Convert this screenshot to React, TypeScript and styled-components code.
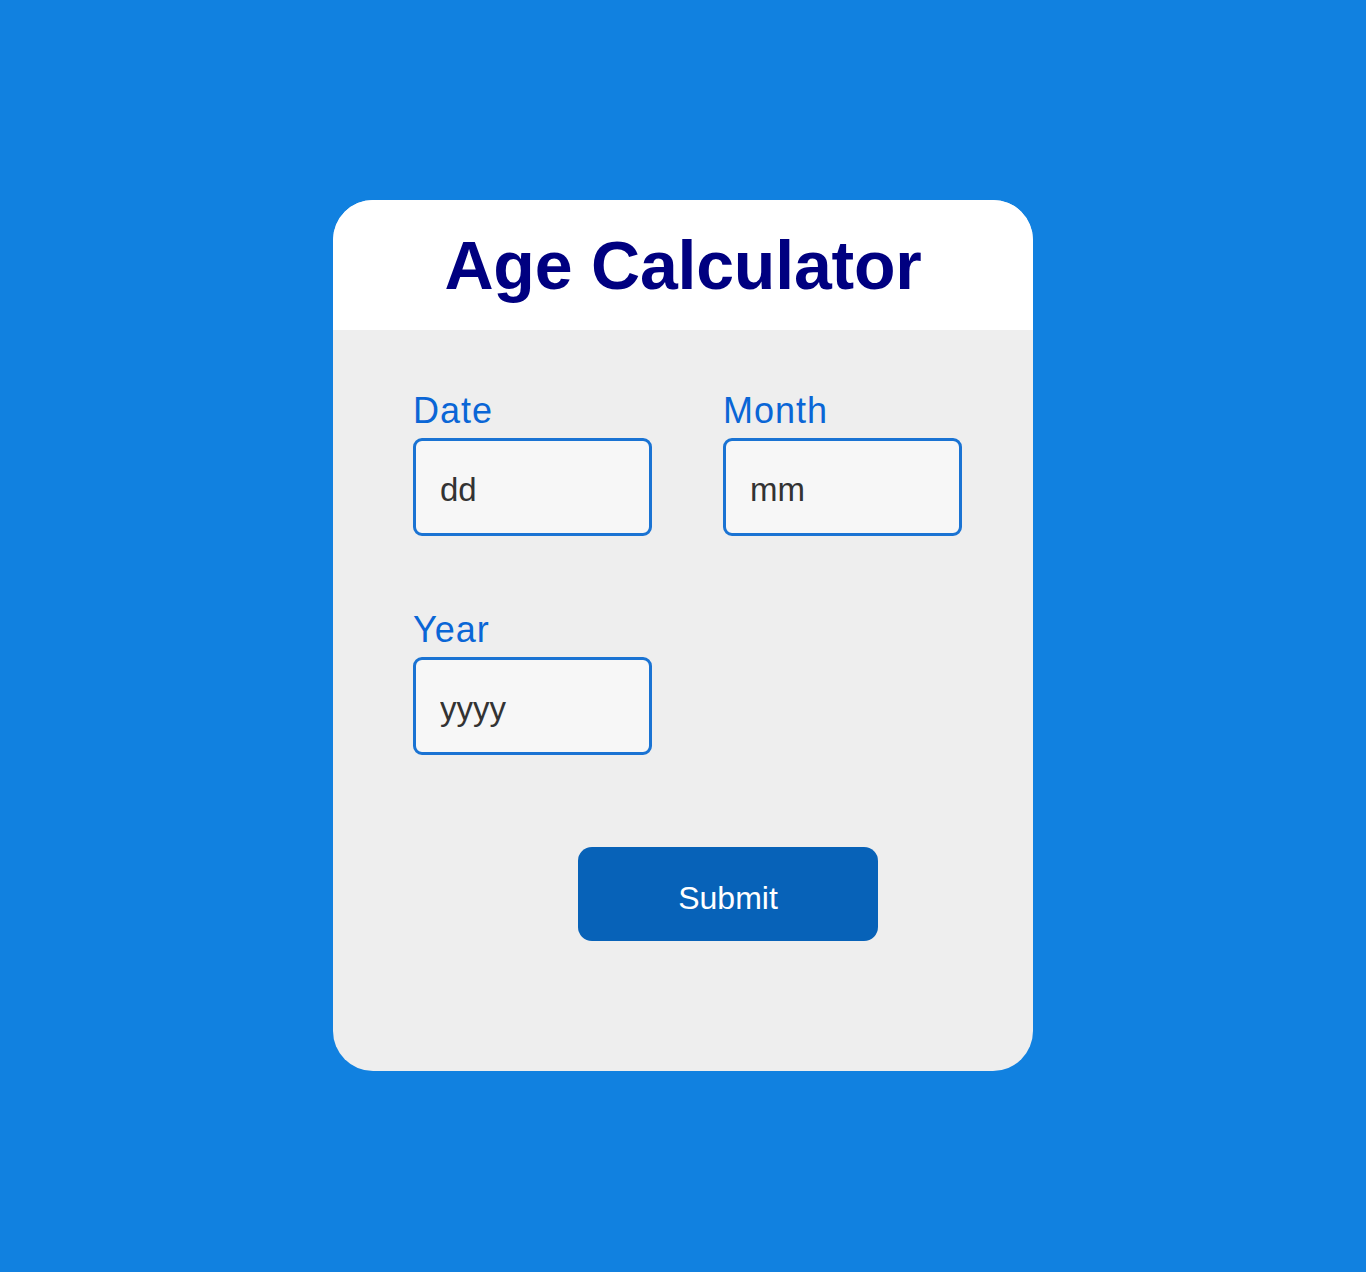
import React from 'react'
import styled, { createGlobalStyle } from 'styled-components'

const GlobalStyle = createGlobalStyle`
  html,
  body {
    background: #1181e0;
    margin: 0;
    padding: 0;
  }

  body {
    font-family: 'Liberation Sans', Arial, Helvetica, sans-serif;
  }
`

const Page = styled.div`
  display: flex;
  justify-content: center;
  min-height: 1272px;
  padding-top: 200px;
  box-sizing: border-box;
`

const Card = styled.div`
  background: #eeeeee;
  border-radius: 40px;
  display: flex;
  flex-direction: column;
  height: 871px;
  overflow: hidden;
  width: 700px;
`

const Header = styled.div`
  align-items: center;
  background: #ffffff;
  display: flex;
  flex-shrink: 0;
  height: 130px;
  justify-content: center;
`

const Title = styled.h1`
  color: #000080;
  font-size: 68px;
  font-weight: 700;
  letter-spacing: -0.2px;
  line-height: normal;
  margin: 0;
`

const Body = styled.form`
  display: flex;
  flex-direction: column;
  padding: 60px 0 0 80px;
`

const FieldGrid = styled.div`
  column-gap: 71px;
  display: grid;
  grid-template-columns: 239px 239px;
  row-gap: 73px;
`

const Field = styled.label`
  display: flex;
  flex-direction: column;
  gap: 6px;
`

const LabelText = styled.span`
  color: #0a66d6;
  font-size: 36px;
  letter-spacing: 1px;
  line-height: normal;
`

const Input = styled.input`
  background: #f7f7f7;
  border: 3px solid #1a73d3;
  border-radius: 9px;
  box-sizing: border-box;
  color: #333333;
  font-family: inherit;
  font-size: 33px;
  height: 98px;
  outline: none;
  padding: 5px 0 0 24px;
  width: 239px;

  &::placeholder {
    color: #333333;
    opacity: 1;
  }
`

const SubmitButton = styled.button`
  background: #0762b8;
  border: none;
  border-radius: 14px;
  color: #ffffff;
  cursor: pointer;
  font-family: inherit;
  font-size: 32px;
  height: 94px;
  margin: 92px 0 0 165px;
  padding-top: 9px;
  width: 300px;
`

const fields = [
  { label: 'Date', placeholder: 'dd' },
  { label: 'Month', placeholder: 'mm' },
  { label: 'Year', placeholder: 'yyyy' },
]

export default function App() {
  return (
    <>
      <GlobalStyle />
      <Page>
        <Card>
          <Header>
            <Title>Age Calculator</Title>
          </Header>
          <Body onSubmit={(e) => e.preventDefault()}>
            <FieldGrid>
              {fields.map((field) => (
                <Field key={field.label}>
                  <LabelText>{field.label}</LabelText>
                  <Input type="text" placeholder={field.placeholder} />
                </Field>
              ))}
            </FieldGrid>
            <SubmitButton type="submit">Submit</SubmitButton>
          </Body>
        </Card>
      </Page>
    </>
  )
}
